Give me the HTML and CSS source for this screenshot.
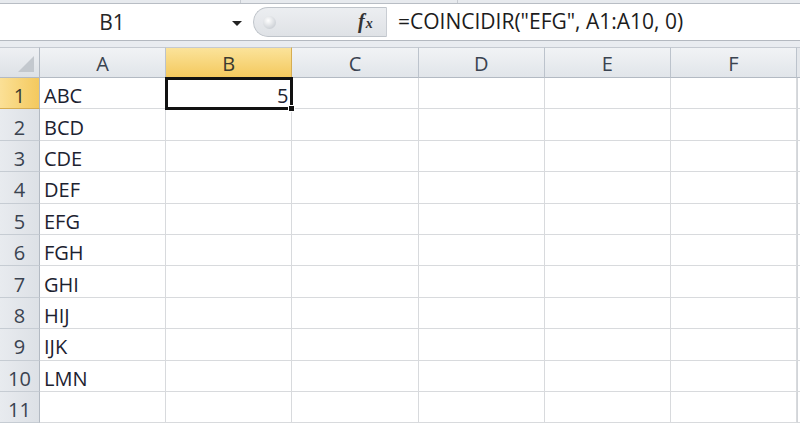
FILE: index.html
```html
<!DOCTYPE html>
<html>
<head>
<meta charset="utf-8">
<link rel="stylesheet" href="styles.css">
</head>
<body>
<div class="app">
  <div class="topstrip"><span class="tick t1"></span><span class="tick t2"></span></div>
  <div class="fbar">
    <div class="namebox">
      <span class="namebox-text">B1</span>
      <span class="dd"></span>
    </div>
    <div class="midsec">
      <span class="knob"></span>
      <span class="fx">f<span class="fx-x">x</span></span>
    </div>
    <div class="formula">=COINCIDIR("EFG", A1:A10, 0)</div>
  </div>
  <div class="band"></div>
  <div class="sheet">
    <div class="corner"><span class="tri"></span></div>
    <div class="ch">A</div>
    <div class="ch sel">B</div>
    <div class="ch">C</div>
    <div class="ch">D</div>
    <div class="ch">E</div>
    <div class="ch">F</div>
    <div class="chend"></div>

    <div class="rh sel">1</div><div class="c">ABC</div><div class="c active">5<span class="handle"></span></div><div class="c"></div><div class="c"></div><div class="c"></div><div class="c"></div><div class="cend"></div>
    <div class="rh">2</div><div class="c">BCD</div><div class="c"></div><div class="c"></div><div class="c"></div><div class="c"></div><div class="c"></div><div class="cend"></div>
    <div class="rh">3</div><div class="c">CDE</div><div class="c"></div><div class="c"></div><div class="c"></div><div class="c"></div><div class="c"></div><div class="cend"></div>
    <div class="rh">4</div><div class="c">DEF</div><div class="c"></div><div class="c"></div><div class="c"></div><div class="c"></div><div class="c"></div><div class="cend"></div>
    <div class="rh">5</div><div class="c">EFG</div><div class="c"></div><div class="c"></div><div class="c"></div><div class="c"></div><div class="c"></div><div class="cend"></div>
    <div class="rh">6</div><div class="c">FGH</div><div class="c"></div><div class="c"></div><div class="c"></div><div class="c"></div><div class="c"></div><div class="cend"></div>
    <div class="rh">7</div><div class="c">GHI</div><div class="c"></div><div class="c"></div><div class="c"></div><div class="c"></div><div class="c"></div><div class="cend"></div>
    <div class="rh">8</div><div class="c">HIJ</div><div class="c"></div><div class="c"></div><div class="c"></div><div class="c"></div><div class="c"></div><div class="cend"></div>
    <div class="rh">9</div><div class="c">IJK</div><div class="c"></div><div class="c"></div><div class="c"></div><div class="c"></div><div class="c"></div><div class="cend"></div>
    <div class="rh">10</div><div class="c">LMN</div><div class="c"></div><div class="c"></div><div class="c"></div><div class="c"></div><div class="c"></div><div class="cend"></div>
    <div class="rh">11</div><div class="c"></div><div class="c"></div><div class="c"></div><div class="c"></div><div class="c"></div><div class="c"></div><div class="cend"></div>
  </div>
</div>
</body>
</html>
```

FILE: styles.css
```css
* { box-sizing: border-box; }
html, body { margin: 0; padding: 0; }
body {
  width: 800px;
  height: 429px;
  overflow: hidden;
  background: #ffffff;
  font-family: "Open Sans", "Liberation Sans", sans-serif;
  color: #1f1f1f;
}
.app { width: 800px; height: 429px; overflow: hidden; }

.topstrip {
  position: relative;
  height: 4px;
  background: #e7eaee;
  border-bottom: 1px solid #b8bdc4;
}
.tick { position: absolute; top: 0; width: 1px; height: 3px; background: #c8ccd2; }
.t1 { left: 240px; }
.t2 { left: 457px; }

.fbar {
  display: flex;
  height: 37px;
  background: #ffffff;
  border-bottom: 1px solid #b4b9c0;
}
.namebox {
  position: relative;
  width: 253px;
  display: flex;
  align-items: center;
  justify-content: center;
  padding-right: 29px;
}
.namebox-text {
  font-size: 21px;
  color: #262626;
}
.dd {
  position: absolute;
  left: 232px;
  top: 17px;
  width: 0; height: 0;
  border-left: 5px solid transparent;
  border-right: 5px solid transparent;
  border-top: 5px solid #222;
}
.midsec {
  position: relative;
  width: 134px;
  margin: 3px 0;
  background: linear-gradient(#eceef1, #dfe2e6);
  border: 1px solid #bfc4ca;
  border-right: 1px solid #c9cdd3;
  border-radius: 16px 0 0 16px;
}
.knob {
  position: absolute;
  left: 9px; top: 8px;
  width: 13px; height: 13px;
  border-radius: 50%;
  background: radial-gradient(circle at 40% 35%, #ffffff, #cfd3d8 70%, #bfc4ca);
}
.fx {
  position: absolute;
  left: 104px; top: 2px;
  font-family: "Liberation Serif", serif;
  font-style: italic;
  font-weight: bold;
  font-size: 20px;
  color: #333;
}
.fx-x { font-size: 14px; margin-left: 1px; }
.formula {
  flex: 1;
  padding-left: 11px;
  font-size: 21px;
  line-height: 35px;
  color: #1c1c1c;
  white-space: nowrap;
}

.band {
  height: 6px;
  background: #e9ecf0;
}

.sheet {
  display: grid;
  grid-template-columns: 40px repeat(6, 126.2px) 1fr;
  grid-template-rows: 31px repeat(11, 31.4px);
}
.corner {
  position: relative;
  background: linear-gradient(#eef0f3, #dde1e6);
  border-right: 1px solid #b3bac3;
  border-bottom: 1px solid #b3bac3;
  border-top: 1px solid #c5cad1;
}
.tri {
  position: absolute;
  right: 5px; bottom: 5px;
  width: 0; height: 0;
  border-left: 16px solid transparent;
  border-bottom: 16px solid #c3c8ce;
}
.ch {
  display: flex;
  align-items: center;
  justify-content: center;
  padding-top: 2px;
  font-size: 20px;
  color: #3a4350;
  background: linear-gradient(#f1f3f5, #e1e5ea);
  border-top: 1px solid #c5cad1;
  border-right: 1px solid #bcc3cc;
  border-bottom: 1px solid #b3bac3;
}
.ch.sel {
  background: linear-gradient(#fbe39a, #f4c95e);
  border-right: 1px solid #d6ad52;
  border-bottom: 1px solid #c99a3d;
  color: #3a3a30;
}
.chend {
  background: #e4e7eb;
  border-top: 1px solid #c5cad1;
  border-bottom: 1px solid #b3bac3;
}
.rh {
  display: flex;
  align-items: center;
  justify-content: center;
  padding-top: 5px;
  font-size: 20px;
  color: #3a4350;
  background: linear-gradient(90deg, #e8ebef, #dde1e6);
  border-right: 1px solid #b3bac3;
  border-bottom: 1px solid #c6ccd3;
}
.rh.sel {
  background: linear-gradient(90deg, #fbe096, #f4c95e);
  border-bottom: 1px solid #d6ad52;
  color: #3a3a30;
}
.c {
  position: relative;
  display: flex;
  align-items: center;
  padding-left: 4px;
  padding-top: 5px;
  font-size: 20px;
  color: #1c2230;
  border-right: 1px solid #d8dadd;
  border-bottom: 1px solid #d8dadd;
}
.cend {
  border-left: 1px solid #d2d5d9;
  border-bottom: 1px solid #d8dadd;
}
.c.active {
  justify-content: flex-end;
  padding-right: 3px;
  outline: 3px solid #111;
  outline-offset: -2px;
  z-index: 2;
}
.handle {
  position: absolute;
  right: -4px; bottom: -4px;
  width: 7px; height: 7px;
  background: #111;
  border: 1px solid #fff;
}
```
